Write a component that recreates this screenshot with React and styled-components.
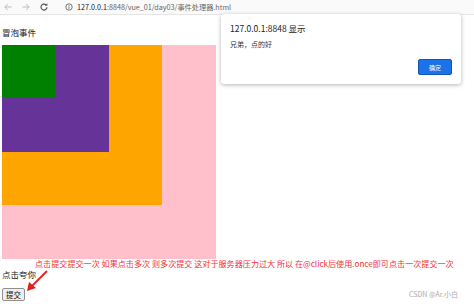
import React from 'react';
import styled, {createGlobalStyle} from 'styled-components';

const Global = createGlobalStyle`
    html, body { margin : 0; padding : 0; background : #fff; }
    body {
        width : 474px;
        height : 304px;
        overflow : hidden;
        font-family : "Noto Sans CJK SC", "Noto Sans", sans-serif;
        color : #222;
    }
`;

const App = () => {
    return (
        <Frame>
            <Global/>
            <Toolbar>
                <NavIcon>
                    <svg width="10" height="10" viewBox="0 0 10 10"><path d="M8.5 5H1.8M4.8 2 1.8 5l3 3" stroke="#bbb" strokeWidth="1" fill="none"/></svg>
                </NavIcon>
                <NavIcon>
                    <svg width="10" height="10" viewBox="0 0 10 10"><path d="M1.5 5h6.7M5.2 2l3 3-3 3" stroke="#bbb" strokeWidth="1" fill="none"/></svg>
                </NavIcon>
                <NavIcon>
                    <svg width="10" height="10" viewBox="0 0 10 10"><path d="M8 5.2A3 3 0 1 1 7.1 2.9" stroke="#555" strokeWidth="1.2" fill="none"/><path d="M8.4 1.2v2.6H5.8z" fill="#555"/></svg>
                </NavIcon>
                <Address>
                    <svg width="8" height="8" viewBox="0 0 10 10"><circle cx="5" cy="5" r="4" stroke="#555" strokeWidth="1" fill="none"/><path d="M5 4.3v3M5 2.6v.9" stroke="#555" strokeWidth="1"/></svg>
                    <Url><Host>127.0.0.1</Host>:8848/vue_01/day03/事件处理器.html</Url>
                </Address>
            </Toolbar>
            <Page>
                <Heading>冒泡事件</Heading>
                <Box size={214} color="pink">
                    <Box size={160} color="orange">
                        <Box size={107} color="rebeccapurple">
                            <Box size={53} color="green" />
                        </Box>
                    </Box>
                </Box>
                <Label>点击夸你</Label>
                <Submit>提交</Submit>
            </Page>
            <Note>点击提交提交一次 如果点击多次 则多次提交 这对于服务器压力过大 所以 在@click后使用.once即可点击一次提交一次</Note>
            <Arrow width="26" height="24" viewBox="0 0 26 24">
                <path d="M22 1 6 17" stroke="#e0201c" strokeWidth="1.8" fill="none"/>
                <path d="M2 21l2-9 7 6z" fill="#e0201c"/>
            </Arrow>
            <Dialog>
                <DialogTitle>127.0.0.1:8848 显示</DialogTitle>
                <DialogText>兄弟，点的好</DialogText>
                <DialogFooter>
                    <OkButton>确定</OkButton>
                </DialogFooter>
            </Dialog>
            <Watermark>CSDN @Ar.小白</Watermark>
        </Frame>
    )
}

const Frame = styled.div`
    position : relative;
    width : 474px;
    height : 304px;
    overflow : hidden;
`;
const Toolbar = styled.div`
    height : 15px;
    display : flex;
    align-items : center;
    padding-left : 3px;
    gap : 8px;
    border-bottom : 1px solid #e6e6e6;
    background : #fafafa;
    box-sizing : border-box;
`;
const NavIcon = styled.div`
    width : 10px;
    height : 10px;
    display : flex;
`;
const Address = styled.div`
    flex : 1;
    height : 14px;
    margin-left : 8px;
    display : flex;
    align-items : center;
    gap : 4px;
`;
const Url = styled.span`
    font-size : 7.2px;
    color : #666;
    white-space : nowrap;
`;
const Host = styled.span`
    color : #222;
`;
const Page = styled.div`
    padding-left : 2px;
`;
const Heading = styled.div`
    font-size : 8.5px;
    line-height : 12px;
    margin-top : 11px;
    margin-bottom : 7px;
`;
const Box = styled.div`
    width : ${p => p.size}px;
    height : ${p => p.size}px;
    background : ${p => p.color};
`;
const Label = styled.div`
    font-size : 8.5px;
    line-height : 12px;
    margin-top : 9px;
`;
const Submit = styled.button`
    display : block;
    font-family : inherit;
    font-size : 7.5px;
    height : 13px;
    padding : 0 3px;
    margin-top : 8px;
    line-height : 11px;
    border : 1px solid #8f8f8f;
    border-radius : 2px;
    background : #efefef;
    color : #111;
`;
const Note = styled.div`
    position : absolute;
    left : 35px;
    top : 258px;
    font-size : 8.1px;
    line-height : 12px;
    color : #f0303a;
    white-space : nowrap;
`;
const Arrow = styled.svg`
    position : absolute;
    left : 25px;
    top : 270px;
`;
const Dialog = styled.div`
    position : absolute;
    left : 221px;
    top : 14px;
    width : 240px;
    height : 70px;
    box-sizing : border-box;
    background : #fff;
    border-radius : 3px;
    box-shadow : 0 1px 4px rgba(0,0,0,0.3);
    padding : 8px 9px;
    display : flex;
    flex-direction : column;
`;
const DialogTitle = styled.div`
    font-size : 8.5px;
    line-height : 12px;
    color : #222;
`;
const DialogText = styled.div`
    font-size : 7px;
    line-height : 10px;
    margin-top : 5px;
    color : #333;
`;
const DialogFooter = styled.div`
    display : flex;
    justify-content : flex-end;
    margin-top : auto;
`;
const OkButton = styled.div`
    width : 34px;
    height : 16px;
    background : #1a73e8;
    border : 1px solid #1557b0;
    border-radius : 2px;
    box-sizing : border-box;
    color : #fff;
    font-size : 6px;
    display : flex;
    align-items : center;
    justify-content : center;
    margin-bottom : 1px;
`;
const Watermark = styled.div`
    position : absolute;
    right : 16px;
    top : 289px;
    font-size : 7px;
    color : #aaa;
`;

export default App;
